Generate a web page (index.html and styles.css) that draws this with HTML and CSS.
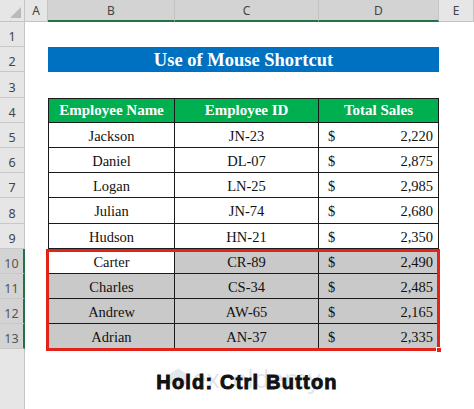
FILE: index.html
```html
<!DOCTYPE html>
<html>
<head>
<meta charset="utf-8">
<link rel="stylesheet" href="styles.css">
</head>
<body>
<div class="sheet">
  <!-- column headers -->
  <div class="ch corner"><span class="tri"></span></div>
  <div class="ch">A</div>
  <div class="ch sel">B</div>
  <div class="ch sel">C</div>
  <div class="ch sel">D</div>
  <div class="ch">E</div>

  <!-- row 1 -->
  <div class="rh">1</div><div></div><div></div><div></div><div></div><div></div>

  <!-- row 2 -->
  <div class="rh">2</div><div></div>
  <div class="title">Use of Mouse Shortcut</div>
  <div></div>

  <!-- row 3 -->
  <div class="rh">3</div><div></div><div></div><div></div><div></div><div></div>

  <!-- row 4 -->
  <div class="rh">4</div><div></div>
  <div class="c th first top">Employee Name</div>
  <div class="c th top">Employee ID</div>
  <div class="c th top">Total Sales</div>
  <div></div>

  <div class="rh">5</div><div></div>
  <div class="c first">Jackson</div><div class="c">JN-23</div>
  <div class="c money"><span>$</span><span>2,220</span></div><div></div>

  <div class="rh">6</div><div></div>
  <div class="c first">Daniel</div><div class="c">DL-07</div>
  <div class="c money"><span>$</span><span>2,875</span></div><div></div>

  <div class="rh">7</div><div></div>
  <div class="c first">Logan</div><div class="c">LN-25</div>
  <div class="c money"><span>$</span><span>2,985</span></div><div></div>

  <div class="rh">8</div><div></div>
  <div class="c first">Julian</div><div class="c">JN-74</div>
  <div class="c money"><span>$</span><span>2,680</span></div><div></div>

  <div class="rh">9</div><div></div>
  <div class="c first">Hudson</div><div class="c">HN-21</div>
  <div class="c money"><span>$</span><span>2,350</span></div><div></div>

  <div class="rh rsel">10</div><div></div>
  <div class="c first">Carter</div><div class="c gs">CR-89</div>
  <div class="c money gs"><span>$</span><span>2,490</span></div><div></div>

  <div class="rh rsel">11</div><div></div>
  <div class="c first gs">Charles</div><div class="c gs">CS-34</div>
  <div class="c money gs"><span>$</span><span>2,485</span></div><div></div>

  <div class="rh rsel">12</div><div></div>
  <div class="c first gs">Andrew</div><div class="c gs">AW-65</div>
  <div class="c money gs"><span>$</span><span>2,165</span></div><div></div>

  <div class="rh rsel">13</div><div></div>
  <div class="c first gs">Adrian</div><div class="c gs">AN-37</div>
  <div class="c money gs"><span>$</span><span>2,335</span></div><div></div>

  <!-- bottom area -->
  <div class="rh blank"></div>
  <div class="caption">
    <div class="wm"><span class="wm-logo"></span><span class="wm-text">exceldemy</span></div>
    <span class="cap-text">Hold: Ctrl Button</span>
  </div>

  <div class="selbox"><span class="handle"></span></div>
</div>
</body>
</html>
```

FILE: styles.css
```css
* { box-sizing: border-box; }
html, body { margin: 0; padding: 0; background: #fff; }
body { width: 474px; height: 409px; overflow: hidden; }

.sheet {
  position: relative;
  display: grid;
  grid-template-columns: 25px 23px 127px 144px 120px 1fr;
  grid-template-rows: 22px repeat(13, 25.2px) 1fr;
  width: 474px;
  height: 409px;
  font-family: "Liberation Serif", "Times New Roman", serif;
}

.ch {
  background: #e6e6e6;
  border-right: 1px solid #c4c4c4;
  border-bottom: 1px solid #c4c4c4;
  font-family: "Noto Sans", "Open Sans", sans-serif;
  font-size: 12px;
  color: #444;
  display: flex;
  align-items: center;
  justify-content: center;
  position: relative;
}
.ch.sel {
  background: #d3d3d3;
  border-bottom: 2px solid #217346;
}
.tri {
  position: absolute;
  right: 3px;
  bottom: 3px;
  width: 0;
  height: 0;
  border-left: 11px solid transparent;
  border-bottom: 11px solid #b9b9b9;
}

.rh {
  background: #e6e6e6;
  border-right: 1px solid #c4c4c4;
  border-bottom: 1px solid #c8c8c8;
  font-family: "Noto Sans", "Open Sans", sans-serif;
  font-size: 12.5px;
  color: #444;
  display: flex;
  align-items: flex-end;
  justify-content: center;
  padding-bottom: 1px;
}
.rh.rsel {
  background: #d3d3d3;
  border-right: 2px solid #217346;
  color: #555;
}
.rh.blank { border-bottom: none; }

.title {
  grid-column: span 3;
  background: #0070c0;
  color: #fff;
  font-weight: bold;
  font-size: 18.5px;
  display: flex;
  align-items: center;
  justify-content: center;
  padding-top: 1px;
}

.c {
  border-right: 1px solid #1a1a1a;
  border-bottom: 1px solid #1a1a1a;
  font-size: 14.5px;
  color: #111;
  display: flex;
  align-items: center;
  justify-content: center;
  background: #fff;
  padding-top: 3px;
}
.c.first { border-left: 1px solid #1a1a1a; }
.c.top { border-top: 1px solid #1a1a1a; }
.c.th {
  background: #00b050;
  color: #fff;
  font-weight: bold;
  font-size: 15px;
  padding-top: 1px;
}
.c.money {
  justify-content: space-between;
  padding: 3px 5px 0 9px;
}
.c.gs { background: #c9c9c9; }

.selbox {
  position: absolute;
  grid-column: 3 / 6;
  grid-row: 11 / 15;
  top: 0;
  left: -2px;
  right: -1px;
  bottom: -2px;
  border: 3px solid #e2231a;
  pointer-events: none;
}
.handle {
  position: absolute;
  right: -5px;
  bottom: -5px;
  width: 6px;
  height: 6px;
  background: #e2231a;
  border: 1px solid #fff;
}

.caption {
  grid-column: span 5;
  position: relative;
  display: flex;
  justify-content: center;
  padding-top: 21px;
  padding-right: 5px;
}
.cap-text {
  position: relative;
  font-family: "Liberation Sans", Arial, sans-serif;
  font-weight: bold;
  font-size: 20px;
  line-height: 24px;
  letter-spacing: 1.2px;
  color: #111;
  -webkit-text-stroke: 0.9px #111;
}
.wm {
  position: absolute;
  left: 145px;
  top: 12px;
  display: flex;
  align-items: center;
  gap: 6px;
}
.wm-logo {
  width: 16px;
  height: 20px;
  background: #e3e8ef;
  clip-path: polygon(50% 0, 100% 25%, 100% 75%, 50% 100%, 0 75%, 0 25%);
}
.wm-text {
  font-family: "Open Sans", sans-serif;
  font-size: 25px;
  color: #dfe5ec;
  letter-spacing: 0.5px;
}
```
